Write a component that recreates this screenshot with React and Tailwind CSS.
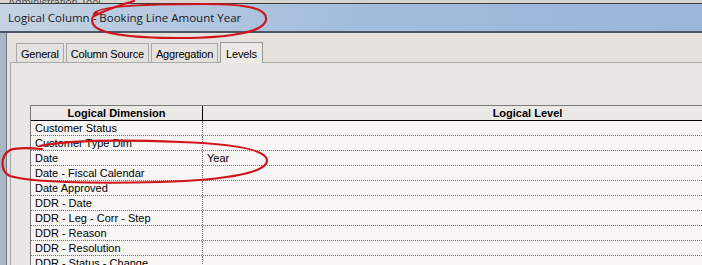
import React from "react";

const rows = [
  ["Customer Status", ""],
  ["Customer Type Dim", ""],
  ["Date", "Year"],
  ["Date - Fiscal Calendar", ""],
  ["Date Approved", ""],
  ["DDR - Date", ""],
  ["DDR - Leg - Corr - Step", ""],
  ["DDR - Reason", ""],
  ["DDR - Resolution", ""],
  ["DDR - Status - Change", ""],
];

const tabs = ["General", "Column Source", "Aggregation", "Levels"];

export default function App() {
  return (
    <div
      className="relative w-[702px] h-[265px] overflow-hidden bg-[#e5e2de] text-black"
      style={{ fontFamily: "'Liberation Sans', Arial, sans-serif" }}
    >
      {/* window behind */}
      <div className="h-[4px] bg-[#d8d5d0] border-b border-[#3a3a3a] overflow-hidden">
        <div className="pl-[8px] text-[11px] leading-[4px] text-[#555]">Administration Tool</div>
      </div>

      {/* title bar */}
      <div className="h-[29px] flex items-center pl-[8px] bg-gradient-to-r from-[#c5d3e3] via-[#a3bddd] to-[#9ab6da] border-b-2 border-[#4b5666]">
        <span className="text-[11.5px] text-[#1b1b1b]" style={{ fontFamily: "'Open Sans', 'Noto Sans', sans-serif" }}>
          Logical Column - Booking Line Amount Year
        </span>
      </div>

      <div className="flex h-full">
        {/* left frame */}
        <div className="w-[7px] bg-[#a9b6c6] border-r border-[#6f7a88]" />

        <div className="flex-1 min-w-0 pl-[3px] pt-[8px]">
          {/* tabs */}
          <div className="flex items-end h-[21px] pl-[6px] text-[11px] tracking-[-0.2px]">
            {tabs.map((t) => (
              <div
                key={t}
                className={
                  t === "Levels"
                    ? "h-[21px] px-[5px] pt-[3px] bg-[#eceae6] border-t border-l border-r border-[#9a9a9a] relative top-[1px]"
                    : "h-[19px] px-[4px] pt-[2px] bg-[#e4e2de] border-t border-l border-r border-[#a8a8a8] mr-[2px]"
                }
              >
                {t}
              </div>
            ))}
          </div>

          {/* panel */}
          <div className="border-t border-l border-[#a8a8a8] bg-[#e9e7e3] h-full pt-[42px] pl-[19px] overflow-hidden">
            <div className="w-[822px] bg-[#f7f6f5] border-l border-t border-[#7a7a7a] text-[11px]">
              <div className="flex h-[15px] leading-[14px] font-bold bg-[#ebe9e6] border-b border-black">
                <div className="w-[172px] text-center border-r border-black">Logical Dimension</div>
                <div className="flex-1 text-center">Logical Level</div>
              </div>
              {rows.map(([dim, lvl]) => (
                <div key={dim} className="flex h-[15px] leading-[14px] border-b border-dotted border-[#6e6e6e]">
                  <div className="w-[172px] pl-[4px] border-r border-dotted border-[#6e6e6e]">{dim}</div>
                  <div className="flex-1 pl-[4px]">{lvl}</div>
                </div>
              ))}
            </div>
          </div>
        </div>
      </div>

      {/* red annotations */}
      <svg className="absolute inset-0 pointer-events-none" width="702" height="265" viewBox="0 0 702 265">
        <g fill="none" stroke="#d0141a" strokeWidth="2.2" strokeLinecap="round">
          <path d="M134 1 C120 5 108 9 94 16" />
          <path d="M94 14 C95 6 150 4 205 4 C245 4 268 8 266 20 C264 32 230 38 180 38 C130 38 98 34 93 24 C91 19 92 16 97 13" />
          <path d="M40 146 C70 140 130 140 180 142 C235 144 266 150 267 160 C268 172 230 180 160 182 C90 184 30 182 10 176 C0 171 0 156 10 150 C18 147 30 148 42 149" />
        </g>
      </svg>
    </div>
  );
}
